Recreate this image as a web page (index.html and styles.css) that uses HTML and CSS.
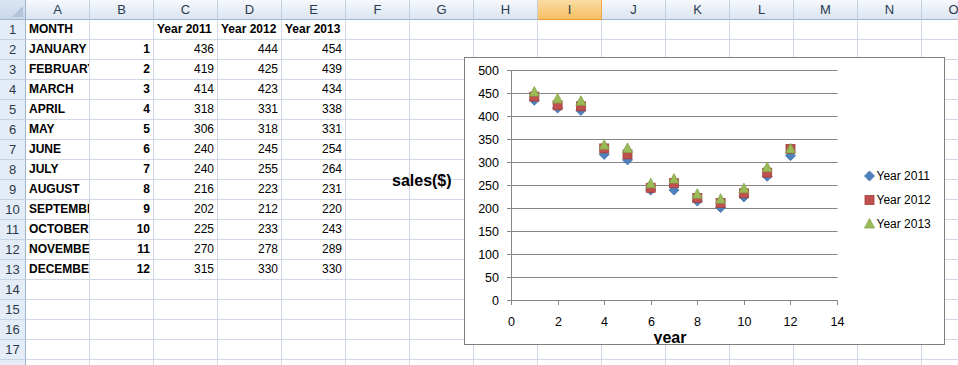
FILE: index.html
```html
<!DOCTYPE html>
<html lang="en">
<head>
  <meta charset="UTF-8" />
  <title>Sales by month</title>
  <link rel="stylesheet" href="styles.css">
</head>
<body>

  <div class="sheet-wrap">
    <div class="sheet">
      <!-- column headers -->
      <div class="corner"></div>
      <div class="ch">A</div><div class="ch">B</div><div class="ch">C</div><div class="ch">D</div><div class="ch">E</div>
      <div class="ch">F</div><div class="ch">G</div><div class="ch">H</div><div class="ch sel">I</div><div class="ch">J</div>
      <div class="ch">K</div><div class="ch">L</div><div class="ch">M</div><div class="ch">N</div><div class="ch">O</div>

      <div class="rh">1</div>
      <div class="c b">MONTH</div><div class="c"></div><div class="c b">Year 2011</div><div class="c b">Year 2012</div><div class="c b">Year 2013</div>
      <div class="c"></div><div class="c"></div><div class="c"></div><div class="c"></div><div class="c"></div><div class="c"></div><div class="c"></div><div class="c"></div><div class="c"></div><div class="c"></div>

      <div class="rh">2</div>
      <div class="c b">JANUARY</div><div class="c b n">1</div><div class="c n">436</div><div class="c n">444</div><div class="c n">454</div>
      <div class="c"></div><div class="c"></div><div class="c"></div><div class="c"></div><div class="c"></div><div class="c"></div><div class="c"></div><div class="c"></div><div class="c"></div><div class="c"></div>

      <div class="rh">3</div>
      <div class="c b">FEBRUARY</div><div class="c b n">2</div><div class="c n">419</div><div class="c n">425</div><div class="c n">439</div>
      <div class="c"></div><div class="c"></div><div class="c"></div><div class="c"></div><div class="c"></div><div class="c"></div><div class="c"></div><div class="c"></div><div class="c"></div><div class="c"></div>

      <div class="rh">4</div>
      <div class="c b">MARCH</div><div class="c b n">3</div><div class="c n">414</div><div class="c n">423</div><div class="c n">434</div>
      <div class="c"></div><div class="c"></div><div class="c"></div><div class="c"></div><div class="c"></div><div class="c"></div><div class="c"></div><div class="c"></div><div class="c"></div><div class="c"></div>

      <div class="rh">5</div>
      <div class="c b">APRIL</div><div class="c b n">4</div><div class="c n">318</div><div class="c n">331</div><div class="c n">338</div>
      <div class="c"></div><div class="c"></div><div class="c"></div><div class="c"></div><div class="c"></div><div class="c"></div><div class="c"></div><div class="c"></div><div class="c"></div><div class="c"></div>

      <div class="rh">6</div>
      <div class="c b">MAY</div><div class="c b n">5</div><div class="c n">306</div><div class="c n">318</div><div class="c n">331</div>
      <div class="c"></div><div class="c"></div><div class="c"></div><div class="c"></div><div class="c"></div><div class="c"></div><div class="c"></div><div class="c"></div><div class="c"></div><div class="c"></div>

      <div class="rh">7</div>
      <div class="c b">JUNE</div><div class="c b n">6</div><div class="c n">240</div><div class="c n">245</div><div class="c n">254</div>
      <div class="c"></div><div class="c"></div><div class="c"></div><div class="c"></div><div class="c"></div><div class="c"></div><div class="c"></div><div class="c"></div><div class="c"></div><div class="c"></div>

      <div class="rh">8</div>
      <div class="c b">JULY</div><div class="c b n">7</div><div class="c n">240</div><div class="c n">255</div><div class="c n">264</div>
      <div class="c"></div><div class="c"></div><div class="c"></div><div class="c"></div><div class="c"></div><div class="c"></div><div class="c"></div><div class="c"></div><div class="c"></div><div class="c"></div>

      <div class="rh">9</div>
      <div class="c b">AUGUST</div><div class="c b n">8</div><div class="c n">216</div><div class="c n">223</div><div class="c n">231</div>
      <div class="c"></div><div class="c"></div><div class="c"></div><div class="c"></div><div class="c"></div><div class="c"></div><div class="c"></div><div class="c"></div><div class="c"></div><div class="c"></div>

      <div class="rh">10</div>
      <div class="c b">SEPTEMBER</div><div class="c b n">9</div><div class="c n">202</div><div class="c n">212</div><div class="c n">220</div>
      <div class="c"></div><div class="c"></div><div class="c"></div><div class="c"></div><div class="c"></div><div class="c"></div><div class="c"></div><div class="c"></div><div class="c"></div><div class="c"></div>

      <div class="rh">11</div>
      <div class="c b">OCTOBER</div><div class="c b n">10</div><div class="c n">225</div><div class="c n">233</div><div class="c n">243</div>
      <div class="c"></div><div class="c"></div><div class="c"></div><div class="c"></div><div class="c"></div><div class="c"></div><div class="c"></div><div class="c"></div><div class="c"></div><div class="c"></div>

      <div class="rh">12</div>
      <div class="c b">NOVEMBER</div><div class="c b n">11</div><div class="c n">270</div><div class="c n">278</div><div class="c n">289</div>
      <div class="c"></div><div class="c"></div><div class="c"></div><div class="c"></div><div class="c"></div><div class="c"></div><div class="c"></div><div class="c"></div><div class="c"></div><div class="c"></div>

      <div class="rh">13</div>
      <div class="c b">DECEMBER</div><div class="c b n">12</div><div class="c n">315</div><div class="c n">330</div><div class="c n">330</div>
      <div class="c"></div><div class="c"></div><div class="c"></div><div class="c"></div><div class="c"></div><div class="c"></div><div class="c"></div><div class="c"></div><div class="c"></div><div class="c"></div>

      <div class="rh">14</div>
      <div class="c"></div><div class="c"></div><div class="c"></div><div class="c"></div><div class="c"></div>
      <div class="c"></div><div class="c"></div><div class="c"></div><div class="c"></div><div class="c"></div><div class="c"></div><div class="c"></div><div class="c"></div><div class="c"></div><div class="c"></div>

      <div class="rh">15</div>
      <div class="c"></div><div class="c"></div><div class="c"></div><div class="c"></div><div class="c"></div>
      <div class="c"></div><div class="c"></div><div class="c"></div><div class="c"></div><div class="c"></div><div class="c"></div><div class="c"></div><div class="c"></div><div class="c"></div><div class="c"></div>

      <div class="rh">16</div>
      <div class="c"></div><div class="c"></div><div class="c"></div><div class="c"></div><div class="c"></div>
      <div class="c"></div><div class="c"></div><div class="c"></div><div class="c"></div><div class="c"></div><div class="c"></div><div class="c"></div><div class="c"></div><div class="c"></div><div class="c"></div>

      <div class="rh">17</div>
      <div class="c"></div><div class="c"></div><div class="c"></div><div class="c"></div><div class="c"></div>
      <div class="c"></div><div class="c"></div><div class="c"></div><div class="c"></div><div class="c"></div><div class="c"></div><div class="c"></div><div class="c"></div><div class="c"></div><div class="c"></div>

      <div class="rh">18</div>
      <div class="c"></div><div class="c"></div><div class="c"></div><div class="c"></div><div class="c"></div>
      <div class="c"></div><div class="c"></div><div class="c"></div><div class="c"></div><div class="c"></div><div class="c"></div><div class="c"></div><div class="c"></div><div class="c"></div><div class="c"></div>
    </div>

    <!-- floating axis title -->
    <div class="axis-title">sales($)</div>

    <!-- floating chart object -->
    <div class="chart">
      <svg width="479" height="286" viewBox="0 0 479 286">
        <defs>
          <polygon id="dia" points="0,-5 5,0 0,5 -5,0" fill="#4f81bd" stroke="#3d6ca6" stroke-width="0.8"/>
          <rect id="sq" x="-4.5" y="-4.5" width="9" height="9" fill="#c0504d" stroke="#a13f3c" stroke-width="0.8"/>
          <polygon id="tri" points="0,-5.5 5,4 -5,4" fill="#9bbb59" stroke="#84a24a" stroke-width="0.8"/>
        </defs>

        <g class="grid">
          <line x1="42" y1="12.5" x2="372.5" y2="12.5"/>
          <line x1="42" y1="35.5" x2="372.5" y2="35.5"/>
          <line x1="42" y1="58.5" x2="372.5" y2="58.5"/>
          <line x1="42" y1="81.5" x2="372.5" y2="81.5"/>
          <line x1="42" y1="104.5" x2="372.5" y2="104.5"/>
          <line x1="42" y1="127.5" x2="372.5" y2="127.5"/>
          <line x1="42" y1="150.5" x2="372.5" y2="150.5"/>
          <line x1="42" y1="173.5" x2="372.5" y2="173.5"/>
          <line x1="42" y1="196.5" x2="372.5" y2="196.5"/>
          <line x1="42" y1="219.5" x2="372.5" y2="219.5"/>
          <line x1="42" y1="242.5" x2="372.5" y2="242.5"/>
          <line x1="46.5" y1="12.5" x2="46.5" y2="247"/>
          <line x1="93.5" y1="242.5" x2="93.5" y2="247"/>
          <line x1="139.5" y1="242.5" x2="139.5" y2="247"/>
          <line x1="186.5" y1="242.5" x2="186.5" y2="247"/>
          <line x1="232.5" y1="242.5" x2="232.5" y2="247"/>
          <line x1="279.5" y1="242.5" x2="279.5" y2="247"/>
          <line x1="325.5" y1="242.5" x2="325.5" y2="247"/>
          <line x1="372.5" y1="242.5" x2="372.5" y2="247"/>
        </g>

        <g class="ylabels">
          <text x="34" y="16.5">500</text>
          <text x="34" y="39.5">450</text>
          <text x="34" y="62.5">400</text>
          <text x="34" y="85.5">350</text>
          <text x="34" y="108.5">300</text>
          <text x="34" y="131.5">250</text>
          <text x="34" y="154.5">200</text>
          <text x="34" y="177.5">150</text>
          <text x="34" y="200.5">100</text>
          <text x="34" y="223.5">50</text>
          <text x="34" y="246.5">0</text>
        </g>

        <g class="xlabels">
          <text x="46.5" y="268">0</text>
          <text x="93.5" y="268">2</text>
          <text x="139.5" y="268">4</text>
          <text x="186.5" y="268">6</text>
          <text x="232.5" y="268">8</text>
          <text x="279.5" y="268">10</text>
          <text x="325.5" y="268">12</text>
          <text x="372.5" y="268">14</text>
        </g>
        <text class="xtitle" x="205" y="285">year</text>

        <!-- Year 2011 -->
        <use href="#dia" x="69.3" y="42.3"/>
        <use href="#dia" x="92.6" y="50.1"/>
        <use href="#dia" x="115.9" y="52.4"/>
        <use href="#dia" x="139.2" y="96.4"/>
        <use href="#dia" x="162.5" y="101.9"/>
        <use href="#dia" x="185.7" y="132.1"/>
        <use href="#dia" x="209" y="132.1"/>
        <use href="#dia" x="232.3" y="143.1"/>
        <use href="#dia" x="255.6" y="149.5"/>
        <use href="#dia" x="278.9" y="138.9"/>
        <use href="#dia" x="302.2" y="118.3"/>
        <use href="#dia" x="325.5" y="97.7"/>

        <!-- Year 2012 -->
        <use href="#sq" x="69.3" y="38.6"/>
        <use href="#sq" x="92.6" y="47.3"/>
        <use href="#sq" x="115.9" y="48.3"/>
        <use href="#sq" x="139.2" y="90.4"/>
        <use href="#sq" x="162.5" y="96.4"/>
        <use href="#sq" x="185.7" y="129.8"/>
        <use href="#sq" x="209" y="125.2"/>
        <use href="#sq" x="232.3" y="139.9"/>
        <use href="#sq" x="255.6" y="144.9"/>
        <use href="#sq" x="278.9" y="135.3"/>
        <use href="#sq" x="302.2" y="114.7"/>
        <use href="#sq" x="325.5" y="90.9"/>

        <!-- Year 2013 -->
        <use href="#tri" x="69.3" y="34.1"/>
        <use href="#tri" x="92.6" y="40.9"/>
        <use href="#tri" x="115.9" y="43.2"/>
        <use href="#tri" x="139.2" y="87.2"/>
        <use href="#tri" x="162.5" y="90.4"/>
        <use href="#tri" x="185.7" y="125.7"/>
        <use href="#tri" x="209" y="121.1"/>
        <use href="#tri" x="232.3" y="136.2"/>
        <use href="#tri" x="255.6" y="141.2"/>
        <use href="#tri" x="278.9" y="130.7"/>
        <use href="#tri" x="302.2" y="109.6"/>
        <use href="#tri" x="325.5" y="90.9"/>

        <!-- legend -->
        <g class="legend">
          <use href="#dia" x="404.5" y="118"/>
          <text x="411.5" y="122">Year 2011</text>
          <use href="#sq" x="404.5" y="142"/>
          <text x="411.5" y="146">Year 2012</text>
          <use href="#tri" x="404.5" y="166"/>
          <text x="411.5" y="170">Year 2013</text>
        </g>
      </svg>
    </div>
  </div>

</body>
</html>
```

FILE: styles.css
```css
body {
  margin: 0;
  padding: 0;
  background: #fff;
  font-family: 'Liberation Sans', Arial, sans-serif;
  color: #000;
}

.sheet-wrap {
  position: relative;
  width: 958px;
  height: 365px;
  overflow: hidden;
}

.sheet {
  display: grid;
  grid-template-columns: 26px repeat(15, 64px);
  grid-auto-rows: 20px;
  width: 986px;
  font-size: 12px;
}

.sheet > div {
  box-sizing: border-box;
  border-right: 1px solid #d0d7e5;
  border-bottom: 1px solid #d0d7e5;
  line-height: 19px;
  white-space: nowrap;
  overflow: hidden;
}

.corner {
  position: relative;
  background: linear-gradient(#dbe5f3, #c9d7ea);
  border-right-color: #9eb6ce !important;
  border-bottom-color: #9eb6ce !important;
}

.corner::after {
  content: "";
  position: absolute;
  right: 2px;
  bottom: 2px;
  border-left: 11px solid transparent;
  border-bottom: 11px solid #b3c4da;
}

.ch {
  text-align: center;
  font-size: 13px;
  color: #2b3a4d;
  background: linear-gradient(#f7f9fd, #e6edf7 55%, #dbe4f1);
  border-right-color: #c3cfdf !important;
  border-bottom-color: #9eb6ce !important;
}

.ch.sel {
  color: #1f3e48;
  background: linear-gradient(#fbdca4, #f8cc80 55%, #f6c063);
  border-right-color: #f1a649 !important;
  border-bottom-color: #f29536 !important;
}

.rh {
  text-align: center;
  font-size: 13px;
  color: #2b3a4d;
  background: #e4ecf7;
  border-right-color: #9eb6ce !important;
  border-bottom-color: #c5d3e4 !important;
}

.c {
  padding: 0 3px;
}

.b {
  font-weight: bold;
}

.n {
  text-align: right;
}

.axis-title {
  position: absolute;
  left: 392px;
  top: 172px;
  font-size: 16px;
  font-weight: bold;
  line-height: 18px;
}

.chart {
  position: absolute;
  left: 464px;
  top: 57px;
  width: 481px;
  height: 288px;
  box-sizing: border-box;
  border: 1px solid #7f7f7f;
  background: #fff;
}

.chart svg {
  display: block;
}

.grid line {
  stroke: #868686;
  stroke-width: 1;
}

.chart text {
  font-family: 'Liberation Sans', Arial, sans-serif;
  font-size: 12.5px;
  fill: #000;
}

.ylabels text {
  text-anchor: end;
}

.xlabels text {
  text-anchor: middle;
}

.chart .xtitle {
  font-size: 16px;
  font-weight: bold;
  text-anchor: middle;
}

.chart .legend text {
  font-size: 12px;
}
```
